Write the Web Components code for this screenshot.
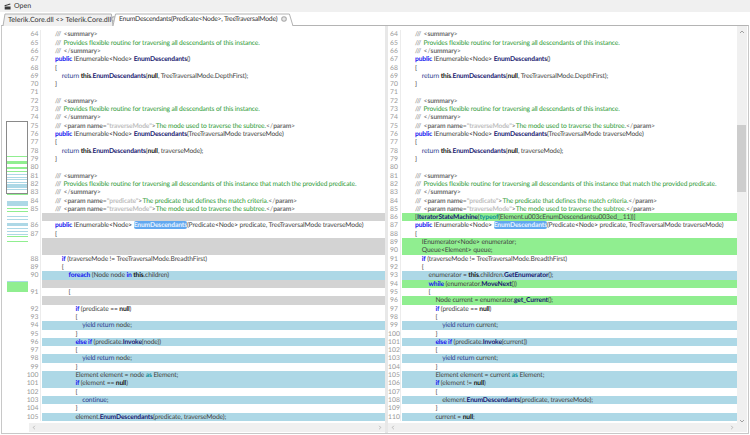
<!DOCTYPE html>
<html lang="en"><head><meta charset="utf-8"><title>Diff</title>
<style>
html,body{margin:0;padding:0;background:#fff}
body{width:750px;height:435px;overflow:hidden;font-family:Lato,"Noto Sans",sans-serif;text-rendering:geometricPrecision}
</style></head><body>
<diff-app>
  <tool-bar slot="bar">Open</tool-bar>
  <tab-strip slot="tabs">
    <doc-tab style="--w:110px;--fs:7.1px;--ls:0px">Telerik.Core.dll &lt;&gt; Telerik.Core.dll</doc-tab>
    <doc-tab active style="--w:180px;--fs:6.8px;--ls:-.23px">EnumDescendants(Predicate&lt;Node&gt;, TreeTraversalMode)</doc-tab>
  </tab-strip>
  <code-pane slot="left" side="left"><diff-minimap></diff-minimap></code-pane>
  <code-pane slot="right" side="right"></code-pane>
  <v-scroll slot="scroll"></v-scroll>
</diff-app>
<script>
const RH = 8.32;
const esc = s => s.replace(/&/g,'&amp;').replace(/</g,'&lt;').replace(/>/g,'&gt;');
const fmt = s => s.split('§').map((p,i)=>{
  if(i%2===0) return esc(p);
  const [c,...r]=p.split('|');
  return `<span class="${c}">${esc(r.join('|'))}</span>`;
}).join('');
const sum = '§d|/// <§§h|summary§§d|>§';
const esum = '§d|/// </§§h|summary§§d|>§';
const param = (n,t)=>`§d|/// <§§h|param name§§d|=§§v|"${n}"§§d|>§§g|${t}§§d|</§§h|param§§d|>§`;
const doc = t=>`§d|/// §§g|${t}§`;
const pub='§k|public§ ';
const ED='§m|EnumDescendants§';
const head = [
 [64,0,sum],[65,0,doc('Provides flexible routine for traversing all descendants of this instance.')],[66,0,esum],
 [67,0,pub+'IEnumerable<Node> '+ED+'()'],[68,0,'{'],
 [69,1,'§n|return§ §b|this§.'+ED+'(§b|null§, TreeTraversalMode.DepthFirst);'],[70,0,'}'],[71,0,''],
 [72,0,sum],[73,0,doc('Provides flexible routine for traversing all descendants of this instance.')],[74,0,esum],
 [75,0,param('traverseMode','The mode used to traverse the subtree.')],
 [76,0,pub+'IEnumerable<Node> '+ED+'(TreeTraversalMode traverseMode)'],[77,0,'{'],
 [78,1,'§n|return§ §b|this§.'+ED+'(§b|null§, traverseMode);'],[79,0,'}'],[80,0,''],
 [81,0,sum],[82,0,doc('Provides flexible routine for traversing all descendants of this instance that match the provided predicate.')],[83,0,esum],
 [84,0,param('predicate','The predicate that defines the match criteria.')],
 [85,0,param('traverseMode','The mode used to traverse the subtree.')]
];
const sig = pub+'IEnumerable<Node> §s|EnumDescendants§(Predicate<Node> predicate, TreeTraversalMode traverseMode)';
const DATA = {
 left: head.concat([
  {gap:1},[86,0,sig],[87,0,'{'],{gap:2},
  [88,1,'§k|if§ (traverseMode != TreeTraversalMode.BreadthFirst)'],[89,1,'{'],
  [90,2,'§k|foreach§ (Node node §k|in§ §b|this§.children)','b'],{gap:1},[91,2,'{'],{gap:1},
  [92,3,'§k|if§ (predicate == §b|null§)'],[93,3,'{'],[94,4,'§n|yield return§ node;','b'],[95,3,'}'],
  [96,3,'§k|else if§ (predicate.§m|Invoke§(node))','b'],[97,3,'{'],[98,4,'§n|yield return§ node;','b'],[99,3,'}'],
  [100,3,'Element element = node §t|as§ Element;','b'],[101,3,'§k|if§ (element == §b|null§)','b'],[102,3,'{'],
  [103,4,'§n|continue§;','b'],[104,3,'}'],[105,3,'element.'+ED+'(predicate, traverseMode);','b']
 ]),
 right: head.concat([
  [86,0,'[§m|IteratorStateMachine§(§t|typeof§(Element.u003cEnumDescendantsu003ed__11))]','g'],
  [87,0,sig],[88,0,'{'],[89,1,'IEnumerator<Node> enumerator;','g'],[90,1,'Queue<Element> queue;','g'],
  [91,1,'§k|if§ (traverseMode != TreeTraversalMode.BreadthFirst)'],[92,1,'{'],
  [93,2,'enumerator = §b|this§.children.§m|GetEnumerator§();','b'],[94,2,'§k|while§ (enumerator.§m|MoveNext§())','g'],[95,2,'{'],
  [96,3,'Node current = enumerator.§m|get_Current§();','g'],[97,3,'§k|if§ (predicate == §b|null§)'],[98,3,'{'],
  [99,4,'§n|yield return§ current;','b'],[100,3,'}'],[101,3,'§k|else if§ (predicate.§m|Invoke§(current))','b'],[102,3,'{'],
  [103,4,'§n|yield return§ current;','b'],[104,3,'}'],[105,3,'Element element = current §t|as§ Element;','b'],
  [106,3,'§k|if§ (element != §b|null§)','b'],[107,3,'{'],[108,4,'element.'+ED+'(predicate, traverseMode);','b'],[109,3,'}'],
  [110,3,'current = §b|null§;','b']
 ])
};
class DiffApp extends HTMLElement{constructor(){super();this.attachShadow({mode:'open'}).innerHTML=`<style>
:host{display:flex;flex-direction:column;width:750px;height:435px;font-family:Lato,"Noto Sans",sans-serif}
.panel{flex:1;min-height:0;display:flex;margin:0 1.5px 1.5px 1px;border:1px solid #c8c8c8;border-top-color:#b4b4b4;background:#fff}
.split{width:3px;background:#e8e8e8;flex:none}
</style><slot name="bar"></slot><slot name="tabs"></slot><div class="panel"><slot name="left"></slot><div class="split"></div><slot name="right"></slot><slot name="scroll"></slot></div>`}}
class ToolBar extends HTMLElement{constructor(){super();this.attachShadow({mode:'open'}).innerHTML=`<style>
:host{display:flex;align-items:center;gap:3px;height:12px;flex:none;background:#f0f0f0;padding-left:4px;font-size:7px;color:#333}
svg{width:7px;height:7px;flex:none}
</style><svg viewBox="0 0 8 8"><path d="M.5 2.6 7 .6l.4 1.2-6.500 2zM.8 4h6.700v3.500H.8z" fill="#3a3a3a"/><path d="M2 2.200l.8-1.700M4 1.600l.8-1" stroke="#ddd" stroke-width=".5"/></svg><slot></slot>`}}
class TabStrip extends HTMLElement{constructor(){super();this.attachShadow({mode:'open'}).innerHTML=`<style>
:host{display:flex;align-items:flex-end;height:13px;flex:none;background:#fff;padding-left:3px;gap:0}
</style><slot></slot>`}}
class DocTab extends HTMLElement{constructor(){super();const a=this.hasAttribute('active');this.attachShadow({mode:'open'}).innerHTML=`<style>
:host{display:flex;align-items:center;justify-content:space-between;position:relative;box-sizing:border-box;width:var(--w);height:12px;padding:0 ${a?6:4}px 0 ${a?6:5}px;font-size:var(--fs);letter-spacing:var(--ls);color:#333;white-space:nowrap;z-index:${a?2:1}}
.bg{position:absolute;left:0;top:0;width:100%;height:13px;overflow:visible}
.t{position:relative}
.x{position:relative;width:6px;height:6px;flex:none}
</style><svg class="bg" viewBox="0 0 100 13" preserveAspectRatio="none"><path d="M0 13 L${a?1.4:1.800} 1 H${a?98:98.500} L100 13" fill="${a?'#fff':'#f0f0f0'}" stroke="#b4b4b4" stroke-width="1" vector-effect="non-scaling-stroke"/></svg><span class="t"><slot></slot></span><svg class="x" viewBox="0 0 6 6"><circle cx="3" cy="3" r="2.800" fill="#a8a8a8"/><circle cx="3" cy="3" r="1.800" fill="#e6e6e6"/></svg>`}}
class CodePane extends HTMLElement{constructor(){super();this.attachShadow({mode:'open'})}
connectedCallback(){const side=this.getAttribute('side');const left=side==='left';
const rows=DATA[side].map(r=>{
 if(r.gap) return `<div class="row" style="height:${r.gap*RH}px"><div class="no"></div><div class="code gray"></div></div>`;
 const [n,ind,txt,bg]=r;
 return `<div class="row"><div class="no">${n}</div><div class="code ${bg==='b'?'blue':bg==='g'?'green':''}" style="padding-left:${13+ind*6.8}px">${fmt(txt)}</div></div>`;
}).join('');
this.shadowRoot.innerHTML=`<style>
:host{display:flex;flex-direction:column;position:relative;box-sizing:border-box;width:${left?383:349}px;flex:none;padding-top:4.3px;font-size:6.7px;letter-spacing:-.13px;color:#444;white-space:nowrap;overflow:hidden}
.rows{flex:1;min-height:0}
.row{display:flex;height:${RH}px;line-height:${RH}px}
.no{box-sizing:border-box;flex:none;width:${left?39:13}px;text-align:right;padding-right:${left?1.5:2}px;color:#999;border-right:1px solid #ececec;font-size:6.8px;letter-spacing:0}
.code{flex:1;min-width:0;overflow:hidden;margin-left:1px}
.gray{background:#d3d3d3}.blue{background:#add8e6}.green{background:#90ee90}
.k{color:#1414f0;font-weight:700}.m{color:#191970;font-weight:700}.b{color:#111;font-weight:700}
.n{color:#2b3a8c}.t{color:#0f8f96;font-weight:700}.g{color:#2e9a36}.d{color:#7c7c7c;letter-spacing:.15px}.h{color:#6c6c6c;font-weight:700}.v{color:#c0c0c0;font-weight:700}
.s{background:#62a8f0;color:#e6f2ff;font-weight:700;border-radius:2px}
.hs{flex:none;height:9px;margin:0 0 1px ${left?27:0}px;background:#f0f0f0;display:flex;justify-content:space-between;align-items:center;padding:0 3px;box-sizing:border-box}
.hs svg{width:4px;height:5px}
</style><div class="rows">${rows}</div><div class="hs"><svg viewBox="0 0 4 6"><path d="M3 1 1 3l2 2" fill="none" stroke="#b0b0b0"/></svg><svg viewBox="0 0 4 6"><path d="M1 1l2 2-2 2" fill="none" stroke="#b0b0b0"/></svg></div><slot></slot>`}}
class DiffMinimap extends HTMLElement{constructor(){super();
const m=[['g',156,1],['g',160.500,3],['g',167,1.500],['g',171,1],['b',174,1],['b',176.500,1],['b',179,1],['b',181.500,1],['b',184,4],['b',189,1],['g',194,1.200],
['b',201,4.500],['g',207.500,1.500],['g',211,1],['b',216,1],['b',219,1],['b',222.500,3.500],['b',228,1],['b',231,1],['b',233.500,1],['g',236,1],['g',240.500,1],['b',281,1],['g',282,9.500]];
this.attachShadow({mode:'open'}).innerHTML=`<style>
:host{position:absolute;left:0;top:0;width:30px;height:100%;pointer-events:none}
i{position:absolute;left:5px;width:20.500px;display:block}
.g{background:#90ee90}.b{background:#add8e6}
.v{position:absolute;left:3.500px;top:95px;width:22px;height:73px;box-sizing:border-box;border:1px solid #8a8a8a}
</style>${m.map(([c,y,h])=>`<i class="${c}" style="top:${y-26}px;height:${h}px"></i>`).join('')}<div class="v"></div>`}}
class VScroll extends HTMLElement{constructor(){super();this.attachShadow({mode:'open'}).innerHTML=`<style>
:host{display:flex;flex-direction:column;box-sizing:border-box;width:10px;flex:none;background:#f0f0f0;margin-bottom:1px}
svg{width:6px;height:4px;margin:4px auto 0;flex:none;display:block}
.sp{height:91px;flex:none}
.th{height:67px;width:9px;background:#cdcdcd;flex:none}
.f{flex:1}
svg.d{margin:0 auto 9px}
</style><svg viewBox="0 0 6 4"><path d="M1 3l2-2 2 2" fill="none" stroke="#a0a0a0"/></svg><div class="sp"></div><div class="th"></div><div class="f"></div><svg class="d" viewBox="0 0 6 4"><path d="M1 1l2 2 2-2" fill="none" stroke="#a0a0a0"/></svg>`}}
customElements.define('diff-app',DiffApp);
customElements.define('tool-bar',ToolBar);
customElements.define('tab-strip',TabStrip);
customElements.define('doc-tab',DocTab);
customElements.define('code-pane',CodePane);
customElements.define('diff-minimap',DiffMinimap);
customElements.define('v-scroll',VScroll);
</script>
</body></html>
